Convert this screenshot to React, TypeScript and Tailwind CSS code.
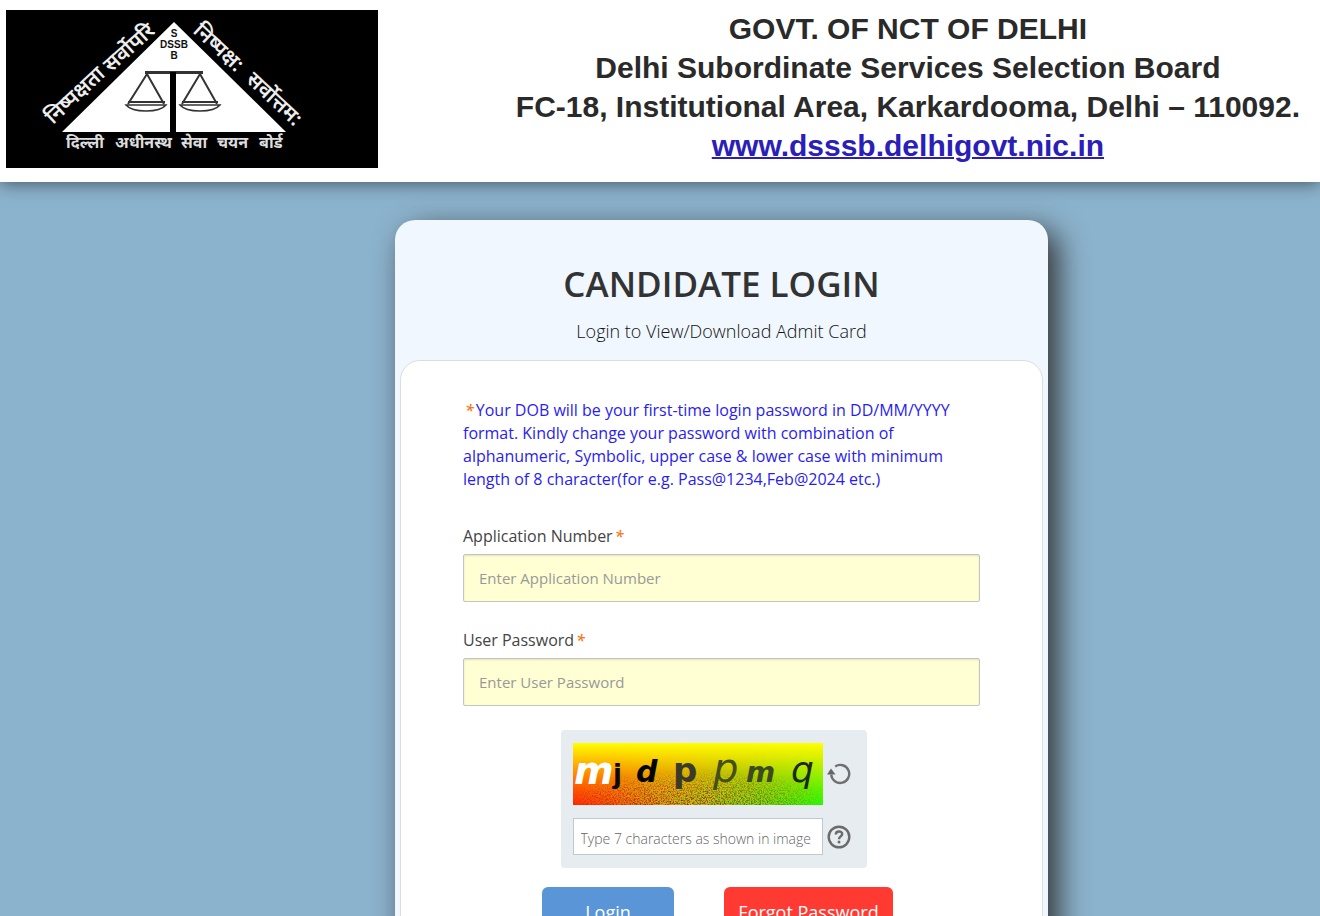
import React from 'react';

const letters = [
  { char: 'm', x: 1, y: 41, size: 38, className: 'font-bold italic', fill: '#ffffff' },
  { char: 'j', x: 40, y: 40, size: 26, className: 'font-bold', fill: '#0a0a00' },
  { char: 'd', x: 63, y: 39, size: 30, className: 'font-bold italic', fill: '#050500' },
  { char: 'p', x: 100, y: 39, size: 34, className: 'font-bold', fill: '#3a3a2a' },
  { char: 'p', x: 140, y: 39, size: 40, className: 'italic', fill: '#44501c' },
  { char: 'm', x: 173, y: 39, size: 28, className: 'font-bold italic', fill: '#3c4a20' },
  { char: 'q', x: 218, y: 39, size: 36, className: 'italic', fill: '#1c2a10' },
];

const Logo: React.FC = () => (
  <svg viewBox="0 0 372 158" className="w-[372px] h-[158px] shrink-0" role="img" aria-label="DSSSB logo">
    <rect width="372" height="158" fill="#000" />
    <path d="M168 12 L280 122 H56 Z" fill="#fff" />
    <g fill="none" stroke="#333" strokeWidth="2">
      <path d="M139 62.5 H197" strokeWidth="3" />
      <path d="M167 62 V122" strokeWidth="6" stroke="#000" />
      <path d="M141 64 L122 94 M141 64 L158 94 M194 64 L176 94 M194 64 L211 94" />
      <path d="M122 92 H159 M176 92 H212" />
      <path d="M120 95 H160 Q155 101 140 101 Q125 101 120 95 Z" strokeWidth="1.5" />
      <path d="M174 95 H214 Q209 101 194 101 Q179 101 174 95 Z" strokeWidth="1.5" />
    </g>
    <g fill="#111" fontFamily="'Liberation Sans', sans-serif" fontWeight="bold" fontSize="10" textAnchor="middle">
      <text x="168" y="27">S</text>
      <text x="168" y="38">DSSB</text>
      <text x="168" y="49">B</text>
    </g>
    <g fill="#eee" fontFamily="'Noto Sans', 'Noto Sans Devanagari', sans-serif" fontSize="21" fontWeight="600">
      <text transform="translate(47 115) rotate(-43)">निष्पक्षता</text>
      <text transform="translate(105 63) rotate(-42)">सर्वोपरि</text>
      <text transform="translate(186 22) rotate(43)">निष्पक्ष:</text>
      <text transform="translate(239 71) rotate(43)">सर्वोत्तम:</text>
    </g>
    <g fill="#ddd" fontFamily="'Noto Sans', 'Noto Sans Devanagari', sans-serif" fontSize="16" fontWeight="bold">
      <text x="60" y="138">दिल्ली</text>
      <text x="109" y="138">अधीनस्थ</text>
      <text x="175" y="138">सेवा</text>
      <text x="211" y="138">चयन</text>
      <text x="253" y="138">बोर्ड</text>
    </g>
  </svg>
);

const Captcha: React.FC = () => (
  <svg viewBox="0 0 250 62" className="w-[250px] h-[62px]" role="img" aria-label="Captcha">
    <defs>
      <linearGradient id="base">
        <stop offset="0" stopColor="#ff2000" />
        <stop offset="0.15" stopColor="#fa2c00" />
        <stop offset="0.4" stopColor="#c86a00" />
        <stop offset="0.7" stopColor="#5cb400" />
        <stop offset="1" stopColor="#22ff00" />
      </linearGradient>
      <linearGradient id="top" x1="0" y1="0" x2="0" y2="1">
        <stop offset="0" stopColor="#ffff00" />
        <stop offset="0.2" stopColor="#fff000" stopOpacity="0.85" />
        <stop offset="1" stopColor="#ffd000" stopOpacity="0" />
      </linearGradient>
      <radialGradient id="fade" cx="0.5" cy="0.95" r="0.55">
        <stop offset="0" stopColor="#fff" />
        <stop offset="0.5" stopColor="#fff" stopOpacity="0.6" />
        <stop offset="1" stopColor="#fff" stopOpacity="0" />
      </radialGradient>
      <mask id="grainMask">
        <rect width="250" height="62" fill="url(#fade)" />
      </mask>
      <filter id="grain" x="0" y="0" width="1" height="1" colorInterpolationFilters="sRGB">
        <feTurbulence type="fractalNoise" baseFrequency="0.7" numOctaves="3" seed="4" />
        <feColorMatrix values="4 0 0 0 -1.2  0 4 0 0 -1.3  0 0 2 0 -0.9  0 0 0 0 0.5" />
      </filter>
    </defs>
    <rect width="250" height="62" fill="url(#base)" />
    <rect width="250" height="62" fill="url(#top)" />
    <g mask="url(#grainMask)">
      <rect width="250" height="62" filter="url(#grain)" />
    </g>
    <g fontFamily="'DejaVu Sans', sans-serif">
      {letters.map((l) => (
        <text key={l.x} x={l.x} y={l.y} fontSize={l.size} fill={l.fill} className={l.className}>
          {l.char}
        </text>
      ))}
    </g>
  </svg>
);

interface FieldProps {
  id: string;
  label: string;
  type: string;
  placeholder: string;
}

const Field: React.FC<FieldProps> = ({ id, label, type, placeholder }) => (
  <div>
    <label htmlFor={id} className="block text-base leading-6 mb-1.5 text-[#444]">
      {label}
      <span className="italic font-semibold text-[#f47b20] ml-0.5">*</span>
    </label>
    <input
      id={id}
      type={type}
      placeholder={placeholder}
      className="block w-full h-12 px-[15px] text-[15px] rounded-xs border border-[#c4c4c4] bg-[#ffffd3] shadow-[inset_0_1px_2px_rgba(0,0,0,0.12)] placeholder:text-[#999]"
    />
  </div>
);

const App: React.FC = () => {
  return (
    <div className="min-h-screen bg-[#8cb3cd] font-['Open_Sans',sans-serif] text-[#333]">
      <header className="flex justify-between bg-white px-1.5 pt-2.5 pb-3.5 shadow-[0_2px_16px_rgba(0,0,0,0.5)]">
        <Logo />
        <div className="pr-3.5 -mt-px text-center font-['Liberation_Sans',sans-serif] font-bold text-[30px] leading-[39px] whitespace-nowrap text-[#2a2a2a]">
          <p>GOVT. OF NCT OF DELHI</p>
          <p>Delhi Subordinate Services Selection Board</p>
          <p>FC-18, Institutional Area, Karkardooma, Delhi – 110092.</p>
          <a href="#" className="text-[#2a20b8] underline decoration-2">www.dsssb.delhigovt.nic.in</a>
        </div>
      </header>

      <main className="pl-[123px] pt-[38px] pb-10">
        <div className="mx-auto max-w-[653px] rounded-[20px] bg-[#f0f7ff] px-[5px] pb-[5px] shadow-[10px_10px_30px_#333]">
          <div className="pt-10 pb-4 text-center">
            <h1 className="text-[35px] leading-[48px] font-semibold">CANDIDATE LOGIN</h1>
            <p className="mt-2.5 text-lg leading-[26px] font-light text-[#111]">Login to View/Download Admit Card</p>
          </div>

          <form
            className="rounded-[20px] border border-[#ddd] bg-white px-[62px] pt-[38px] pb-10"
            onSubmit={(e) => e.preventDefault()}
          >
            <p className="mb-[33px] text-base leading-[23px] text-[#2a1cf2]">
              <span className="italic font-semibold text-[#f47b20] mx-0.5">*</span>
              Your DOB will be your first-time login password in DD/MM/YYYY format. Kindly change your
              password with combination of alphanumeric, Symbolic, upper case &amp; lower case with minimum
              length of 8 character(for e.g. Pass@1234,Feb@2024 etc.)
            </p>

            <div className="flex flex-col gap-[26px] mb-6">
              <Field id="application" label="Application Number" type="text" placeholder="Enter Application Number" />
              <Field id="password" label="User Password" type="password" placeholder="Enter User Password" />
            </div>

            <div className="mr-4 flex justify-center">
              <div className="w-[306px] rounded-sm bg-[#e7ecf0] px-3 py-[13px]">
                <div className="flex items-center gap-1">
                  <Captcha />
                  <button type="button" aria-label="Refresh captcha">
                    <svg viewBox="0 0 24 24" className="size-6" fill="none" stroke="#707070" strokeWidth="2.4">
                      <path d="M4.2 12.5 A9 9 0 1 0 8.2 4.4" />
                      <path d="M0 12.5 L4 6.5 L8.5 12.5 Z" fill="#666" stroke="none" />
                    </svg>
                  </button>
                </div>
                <div className="mt-[13px] flex items-center gap-1">
                  <input
                    type="text"
                    aria-label="Captcha characters"
                    placeholder="Type 7 characters as shown in image"
                    className="w-[250px] h-[37px] px-[7px] pt-1 text-sm font-light border border-[#c0c8d0] bg-white placeholder:text-[#666]"
                  />
                  <button type="button" aria-label="Help">
                    <svg viewBox="0 0 24 24" className="size-6" fill="none" stroke="#6b6b6b">
                      <circle cx="12" cy="12" r="10.3" strokeWidth="2.4" />
                      <path d="M8.8 9.5 C8.8 5.4 15.4 5.6 15.2 9.2 C15 11.4 12 11.6 12 14.2" strokeWidth="2.4" />
                      <circle cx="12" cy="17" r="1.5" fill="#6b6b6b" stroke="none" />
                    </svg>
                  </button>
                </div>
              </div>
            </div>

            <div className="mt-[19px] mr-2 flex justify-center gap-[50px] text-lg text-white">
              <button type="submit" className="w-[132px] h-[50px] rounded-md bg-[#5a95d8]">Login</button>
              <button type="button" className="w-[169px] h-[50px] rounded-md bg-[#ff3a33]">Forgot Password</button>
            </div>
          </form>
        </div>
      </main>
    </div>
  );
};

export default App;
